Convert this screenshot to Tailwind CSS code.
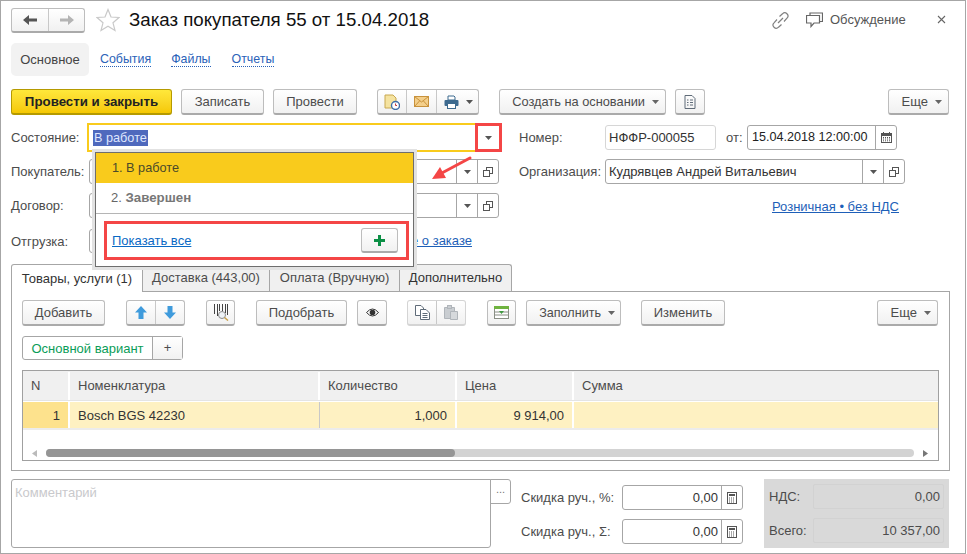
<!DOCTYPE html>
<html lang="ru">
<head>
<meta charset="utf-8">
<title>Заказ покупателя 55</title>
<script src="https://cdn.jsdelivr.net/npm/@tailwindcss/browser@4"></script>
</head>
<body class="bg-white">
<div class="relative w-[966px] h-[554px] border border-[#a6a6a6] overflow-hidden bg-white text-[13px] text-[#4c4c4c] [font-family:'Liberation_Sans',sans-serif]">

  <!-- header -->
  <div class="flex items-center mt-[7px] h-[24px]">
    <div class="flex ml-[10px] w-[74px] h-[25px] rounded-[3px] border border-[#bdbdbd] border-b-2 border-b-[#aaa] bg-linear-to-b from-white to-[#f1f1f1]">
      <div class="w-[37px] flex items-center justify-center border-r border-[#c8c8c8]">
        <svg width="14" height="12" viewBox="0 0 14 12"><path d="M0 6 L6 1 V4.5 H14 V7.5 H6 V11 Z" fill="#555"/></svg>
      </div>
      <div class="flex-1 flex items-center justify-center">
        <svg width="14" height="12" viewBox="0 0 14 12"><path d="M14 6 L8 1 V4.5 H0 V7.5 H8 V11 Z" fill="#b4b4b4"/></svg>
      </div>
    </div>
    <svg class="ml-[11px]" width="24" height="24" viewBox="0 0 24 24"><path d="M12 1.5 L15 9 L23 9.5 L17 14.8 L19 22.5 L12 18.2 L5 22.5 L7 14.8 L1 9.5 L9 9 Z" fill="none" stroke="#c9c9c9" stroke-width="1.2"/></svg>
    <div class="ml-[9px] w-[320px] text-[18.7px] text-[#111] whitespace-nowrap">Заказ покупателя 55 от 15.04.2018</div>
    <svg class="ml-[323px]" width="17" height="17" viewBox="0 0 17 17" fill="none" stroke="#808080" stroke-width="1.2"><path d="M7.5 4.5 L10.5 1.8 A2.8 2.8 0 0 1 15 6.2 L12 9.5"/><path d="M9.5 12.5 L6.5 15.2 A2.8 2.8 0 0 1 2 10.8 L5 7.5"/><path d="M6 11 L11 6"/></svg>
    <svg class="ml-[17px]" width="17" height="16" viewBox="0 0 17 16" fill="none" stroke="#666" stroke-width="1.2"><path d="M4 3.5 V1 H16.5 V9.5 H13.5"/><path d="M0.5 3.5 H13.5 V11 H8 L5 14.5 V11 H0.5 Z" fill="#fff"/></svg>
    <div class="ml-[7px] text-[#555] whitespace-nowrap">Обсуждение</div>
    <svg class="ml-[31px] -mt-[2px]" width="9" height="9" viewBox="0 0 9 9" stroke="#666" stroke-width="1.1"><path d="M1 1 L8 8 M8 1 L1 8"/></svg>
  </div>

  <!-- section tabs -->
  <div class="flex items-center mt-[11px] h-[33px] ml-[10px]">
    <div class="w-[78px] h-full flex items-center justify-center rounded-[5px] bg-[#f2f2f2] text-[#444]">Основное</div>
    <a class="ml-[11px] text-[12.4px] text-[#2a62b8] border-b border-dotted border-[#2a62b8] leading-[14px]">События</a>
    <a class="ml-[20px] text-[12.4px] text-[#2a62b8] border-b border-dotted border-[#2a62b8] leading-[14px]">Файлы</a>
    <a class="ml-[21px] text-[12.4px] text-[#2a62b8] border-b border-dotted border-[#2a62b8] leading-[14px]">Отчеты</a>
  </div>

  <!-- command bar -->
  <div class="flex mt-[13px] h-[26px] ml-[10px]">
    <div class="w-[161px] flex items-center justify-center rounded-[3px] border border-[#b59a00] border-b-2 bg-linear-to-b from-[#ffe83a] to-[#f5c800] font-bold text-[13.3px] text-[#222]">Провести и закрыть</div>
    <div class="ml-[9px] w-[83px] flex items-center justify-center rounded-[3px] border border-[#bdbdbd] border-b-2 border-b-[#aaa] bg-linear-to-b from-white to-[#f1f1f1]">Записать</div>
    <div class="ml-[9px] w-[84px] flex items-center justify-center rounded-[3px] border border-[#bdbdbd] border-b-2 border-b-[#aaa] bg-linear-to-b from-white to-[#f1f1f1]">Провести</div>
    <div class="ml-[20px] w-[102px] flex rounded-[3px] border border-[#bdbdbd] border-b-2 border-b-[#aaa] bg-linear-to-b from-white to-[#f1f1f1]">
      <div class="w-[29px] flex items-center justify-center border-r border-[#c8c8c8]">
        <svg width="16" height="16" viewBox="0 0 16 16"><path d="M1 1 H9 L12 4 V14 H1 Z" fill="#f5e3a0" stroke="#c8a850"/><circle cx="11.5" cy="11.5" r="4" fill="#fff" stroke="#3f6fa8" stroke-width="1.4"/><path d="M11.5 9.5 V11.5 H13" stroke="#c23b3b" fill="none"/></svg>
      </div>
      <div class="w-[30px] flex items-center justify-center border-r border-[#c8c8c8]">
        <svg width="15" height="11" viewBox="0 0 15 11"><rect x="0.5" y="0.5" width="14" height="10" fill="#f4cf8a" stroke="#c8923c"/><path d="M0.5 0.5 L7.5 6 L14.5 0.5 M0.5 10.5 L5.5 5 M14.5 10.5 L9.5 5" fill="none" stroke="#c8923c"/></svg>
      </div>
      <div class="flex-1 flex items-center pl-[7px]">
        <svg width="15" height="14" viewBox="0 0 15 14"><path d="M4 1 H10 L11 2 V5 H4 Z" fill="#fff" stroke="#3d6a8f"/><rect x="0.5" y="5" width="14" height="6" rx="1" fill="#3d6a8f"/><rect x="3.5" y="8.5" width="8" height="5" fill="#fff" stroke="#3d6a8f"/></svg>
        <svg class="ml-[7px]" width="7" height="4" viewBox="0 0 7 4"><path d="M0 0 H7 L3.5 4 Z" fill="#555"/></svg>
      </div>
    </div>
    <div class="ml-[20px] w-[167px] flex items-center justify-end gap-[7px] pr-[6px] rounded-[3px] border border-[#bdbdbd] border-b-2 border-b-[#aaa] bg-linear-to-b from-white to-[#f1f1f1] text-[12.8px]">Создать на основании
      <svg width="7" height="4" viewBox="0 0 7 4"><path d="M0 0 H7 L3.5 4 Z" fill="#666"/></svg>
    </div>
    <div class="ml-[9px] w-[30px] flex items-center justify-center rounded-[3px] border border-[#bdbdbd] border-b-2 border-b-[#aaa] bg-linear-to-b from-white to-[#f1f1f1]">
      <svg width="12" height="14" viewBox="0 0 12 14" fill="none" stroke="#5f6b78"><path d="M1 .5 H8 L11 3.5 V13.5 H1 Z"/><path d="M3 5 H4.5 M6 5 H9 M3 7.5 H4.5 M6 7.5 H9 M3 10 H4.5 M6 10 H9"/></svg>
    </div>
    <div class="ml-[183px] w-[61px] flex items-center justify-end gap-[7px] pr-[6px] rounded-[3px] border border-[#bdbdbd] border-b-2 border-b-[#aaa] bg-linear-to-b from-white to-[#f1f1f1]">Еще
      <svg width="7" height="4" viewBox="0 0 7 4"><path d="M0 0 H7 L3.5 4 Z" fill="#666"/></svg>
    </div>
  </div>

  <!-- row: state, number, date -->
  <div class="flex items-center mt-[8px] h-[29px] ml-[10px]">
    <div class="w-[76px]">Состояние:</div>
    <div class="relative w-[415px] h-full flex items-center border-2 border-[#f9cb1c] pl-[4px] bg-white">
      <span class="bg-[#4f69bd] text-[#dfe6ff] text-[12.7px] px-px leading-[16px]">В работе</span>
      <div class="absolute -right-[2px] -top-[2px] w-[27px] h-[29px] border-[3px] border-[#f44646] flex items-center justify-center">
        <svg width="7" height="4" viewBox="0 0 7 4"><path d="M0 0 H7 L3.5 4 Z" fill="#555"/></svg>
      </div>
    </div>
    <div class="ml-[17px] w-[86px]">Номер:</div>
    <div class="w-[111px] h-[25px] flex items-center pl-[3px] rounded-[3px] border border-[#d6d6d6] text-[#333]">НФФР-000055</div>
    <div class="ml-[10px] w-[21px]">от:</div>
    <div class="w-[150px] h-[25px] flex rounded-[3px] border border-[#a6a6a6] text-[#222]">
      <div class="flex-1 flex items-center pl-[4px] text-[12.6px] whitespace-nowrap">15.04.2018 12:00:00</div>
      <div class="w-[21px] flex items-center justify-center border-l border-[#a6a6a6]">
        <svg width="11" height="11" viewBox="0 0 11 11"><rect x="0.5" y="1.5" width="10" height="9" fill="none" stroke="#555"/><rect x="0.5" y="1.5" width="10" height="2.5" fill="#555"/><path d="M2.5 0 V2 M8.5 0 V2" stroke="#555"/><path d="M2 5.5 H9 M2 7 H9 M2 8.8 H9" stroke="#555" stroke-dasharray="1 1"/></svg>
      </div>
    </div>
  </div>

  <!-- row: customer, organisation -->
  <div class="flex items-center mt-[7px] h-[25px] ml-[10px]">
    <div class="w-[78px] whitespace-nowrap">Покупатель:</div>
    <div class="w-[410px] h-full flex rounded-[3px] border border-[#a6a6a6]">
      <div class="flex-1"></div>
      <div class="w-[21px] flex items-center justify-center border-l border-[#a6a6a6]"><svg width="7" height="4" viewBox="0 0 7 4"><path d="M0 0 H7 L3.5 4 Z" fill="#555"/></svg></div>
      <div class="w-[21px] flex items-center justify-center border-l border-[#a6a6a6]"><svg width="10" height="10" viewBox="0 0 10 10" fill="#fff" stroke="#555"><rect x="3.5" y=".5" width="6" height="6"/><rect x=".5" y="3.5" width="6" height="6"/></svg></div>
    </div>
    <div class="ml-[20px] w-[86px] whitespace-nowrap">Организация:</div>
    <div class="w-[300px] h-full flex rounded-[3px] border border-[#a6a6a6] text-[#333]">
      <div class="flex-1 flex items-center pl-[3px] whitespace-nowrap">Кудрявцев Андрей Витальевич</div>
      <div class="w-[21px] flex items-center justify-center border-l border-[#a6a6a6]"><svg width="7" height="4" viewBox="0 0 7 4"><path d="M0 0 H7 L3.5 4 Z" fill="#555"/></svg></div>
      <div class="w-[21px] flex items-center justify-center border-l border-[#a6a6a6]"><svg width="10" height="10" viewBox="0 0 10 10" fill="#fff" stroke="#555"><rect x="3.5" y=".5" width="6" height="6"/><rect x=".5" y="3.5" width="6" height="6"/></svg></div>
    </div>
  </div>

  <!-- row: contract, price type -->
  <div class="flex items-center mt-[9px] h-[25px] ml-[10px]">
    <div class="w-[78px]">Договор:</div>
    <div class="w-[410px] h-full flex rounded-[3px] border border-[#a6a6a6]">
      <div class="flex-1"></div>
      <div class="w-[21px] flex items-center justify-center border-l border-[#a6a6a6]"><svg width="7" height="4" viewBox="0 0 7 4"><path d="M0 0 H7 L3.5 4 Z" fill="#555"/></svg></div>
      <div class="w-[21px] flex items-center justify-center border-l border-[#a6a6a6]"><svg width="10" height="10" viewBox="0 0 10 10" fill="#fff" stroke="#555"><rect x="3.5" y=".5" width="6" height="6"/><rect x=".5" y="3.5" width="6" height="6"/></svg></div>
    </div>
    <a class="ml-[273px] mt-[3px] text-[#1e5fb8] underline whitespace-nowrap">Розничная • без НДС</a>
  </div>

  <!-- row: shipment -->
  <div class="flex items-center mt-[11px] h-[24px] ml-[10px]">
    <div class="w-[78px] pt-px">Отгрузка:</div>
    <div class="w-[100px] h-full rounded-l-[3px] border border-[#a6a6a6]"></div>
    <a class="ml-[222px] text-[#1e5fb8] underline whitespace-nowrap">е о заказе</a>
  </div>

  <!-- document tabs -->
  <div class="relative flex mt-[11px] h-[28px] ml-[10px]">
    <div class="w-[132px] flex items-center justify-center rounded-t-[3px] border border-[#a6a6a6] border-b-0 bg-white text-[#333] h-[28px]">Товары, услуги (1)</div>
    <div class="w-[127px] flex items-center justify-center border-t border-r border-[#a6a6a6] bg-[#f0f0f0] h-[27px]">Доставка (443,00)</div>
    <div class="w-[130px] flex items-center justify-center border-t border-r border-[#a6a6a6] bg-[#f0f0f0] h-[27px]">Оплата (Вручную)</div>
    <div class="w-[112px] flex items-center justify-center rounded-tr-[3px] border-t border-r border-[#a6a6a6] bg-[#f0f0f0] h-[27px] text-[#333]">Дополнительно</div>
  </div>

  <!-- tab panel -->
  <div class="-mt-px ml-[10px] w-[939px] h-[180px] border border-[#a6a6a6]">
    <div class="flex mt-[8px] h-[26px] ml-[10px]">
      <div class="w-[83px] flex items-center justify-center pt-px rounded-[3px] border border-[#bdbdbd] border-b-2 border-b-[#aaa] bg-linear-to-b from-white to-[#f1f1f1]">Добавить</div>
      <div class="ml-[21px] w-[59px] flex rounded-[3px] border border-[#bdbdbd] border-b-2 border-b-[#aaa] bg-linear-to-b from-white to-[#f1f1f1]">
        <div class="w-[29px] flex items-center justify-center border-r border-[#c8c8c8]"><svg width="12" height="13" viewBox="0 0 12 13"><path d="M6 0 L12 6.5 H8.5 V13 H3.5 V6.5 H0 Z" fill="#3f9bdc"/></svg></div>
        <div class="flex-1 flex items-center justify-center"><svg width="12" height="13" viewBox="0 0 12 13"><path d="M6 13 L12 6.5 H8.5 V0 H3.5 V6.5 H0 Z" fill="#3f9bdc"/></svg></div>
      </div>
      <div class="ml-[21px] w-[29px] flex items-center justify-center rounded-[3px] border border-[#bdbdbd] border-b-2 border-b-[#aaa] bg-linear-to-b from-white to-[#f1f1f1]">
        <svg width="16" height="17" viewBox="0 0 16 17"><path d="M1.5 0 V10 M4.5 0 V12 M6.5 0 V7 M9.5 0 V7 M12.5 0 V9 M14.5 0 V11" stroke="#444" fill="none"/><circle cx="9" cy="11" r="3.5" fill="#eef2f6" stroke="#8a8a8a"/><path d="M11.5 13.5 L15 16.5" stroke="#c9a14a" stroke-width="1.5"/></svg>
      </div>
      <div class="ml-[21px] w-[91px] flex items-center justify-center pt-px rounded-[3px] border border-[#bdbdbd] border-b-2 border-b-[#aaa] bg-linear-to-b from-white to-[#f1f1f1]">Подобрать</div>
      <div class="ml-[10px] w-[30px] flex items-center justify-center rounded-[3px] border border-[#bdbdbd] border-b-2 border-b-[#aaa] bg-linear-to-b from-white to-[#f1f1f1]">
        <svg width="13" height="9" viewBox="0 0 13 9"><path d="M0.5 4.5 Q6.5 -2.5 12.5 4.5 Q6.5 11.5 0.5 4.5 Z" fill="#fff" stroke="#333"/><circle cx="6.5" cy="4.5" r="2.8" fill="#333"/></svg>
      </div>
      <div class="ml-[20px] w-[59px] flex rounded-[3px] border border-[#d4d4d4] border-b-2 bg-linear-to-b from-white to-[#f1f1f1]">
        <div class="w-[29px] flex items-center justify-center border-r border-[#c8c8c8]"><svg width="15" height="15" viewBox="0 0 15 15" fill="#fff" stroke="#5f6b78"><path d="M.5 .5 H6 L8.5 3 V10.5 H.5 Z"/><path d="M5.5 4.5 H11 L14.5 8 V14.5 H5.5 Z"/><path d="M7.5 8.5 H12.5 M7.5 10.5 H12.5 M7.5 12.5 H12.5"/></svg></div>
        <div class="flex-1 flex items-center justify-center"><svg width="14" height="15" viewBox="0 0 14 15" fill="#c9cdd1" stroke="#b0b5ba"><path d="M.5 2.5 H10.5 V13.5 H.5 Z"/><rect x="3.5" y=".5" width="4" height="3"/><path d="M6.5 6.5 H13.5 V14.5 H6.5 Z" fill="#d6d9dc"/></svg></div>
      </div>
      <div class="ml-[21px] w-[29px] flex items-center justify-center rounded-[3px] border border-[#bdbdbd] border-b-2 border-b-[#aaa] bg-linear-to-b from-white to-[#f1f1f1]">
        <svg width="15" height="13" viewBox="0 0 15 13"><rect x=".5" y=".5" width="14" height="12" fill="#fff" stroke="#8a8f85"/><rect x="0" y="0" width="15" height="3" fill="#6fb33f"/><path d="M1 6 H14 M1 9 H14" stroke="#8a8f85"/><path d="M5 5 H10 L7.5 8 Z" fill="#3f9a3f"/></svg>
      </div>
      <div class="ml-[10px] w-[95px] flex items-center justify-end gap-[7px] pr-[5px] pt-px rounded-[3px] border border-[#bdbdbd] border-b-2 border-b-[#aaa] bg-linear-to-b from-white to-[#f1f1f1] text-[12.6px]">Заполнить
        <svg width="7" height="4" viewBox="0 0 7 4"><path d="M0 0 H7 L3.5 4 Z" fill="#666"/></svg>
      </div>
      <div class="ml-[20px] w-[84px] flex items-center justify-center pt-px rounded-[3px] border border-[#bdbdbd] border-b-2 border-b-[#aaa] bg-linear-to-b from-white to-[#f1f1f1]">Изменить</div>
      <div class="ml-[152px] w-[61px] flex items-center justify-end gap-[7px] pr-[6px] pt-px rounded-[3px] border border-[#bdbdbd] border-b-2 border-b-[#aaa] bg-linear-to-b from-white to-[#f1f1f1]">Еще
        <svg width="7" height="4" viewBox="0 0 7 4"><path d="M0 0 H7 L3.5 4 Z" fill="#666"/></svg>
      </div>
    </div>

    <div class="flex mt-[10px] ml-[10px] w-[161px] h-[24px] rounded-[3px] border border-[#a6a6a6]">
      <div class="w-[129px] flex items-center justify-center pt-px text-[#0a9d58] whitespace-nowrap">Основной вариант</div>
      <div class="flex-1 flex items-center justify-center border-l border-[#a6a6a6] bg-linear-to-b from-white to-[#f1f1f1]">+</div>
    </div>

    <!-- table -->
    <div class="mt-[10px] ml-[10px] w-[917px] h-[91px] border border-[#a0a0a0]">
      <div class="grid grid-cols-[47px_250px_137px_117px_1fr] h-[30px] pt-px bg-[#f0f0f0] border-b border-[#e4e4e4]">
        <div class="flex items-center pl-[8px] border-r-2 border-white">N</div>
        <div class="flex items-center pl-[8px] border-r-2 border-white">Номенклатура</div>
        <div class="flex items-center pl-[8px] border-r-2 border-white">Количество</div>
        <div class="flex items-center pl-[8px] border-r-2 border-white">Цена</div>
        <div class="flex items-center pl-[8px]">Сумма</div>
      </div>
      <div class="grid grid-cols-[47px_250px_137px_117px_1fr] h-[28px] mt-px bg-[#fef1c2] border-b-2 border-[#ececec] text-[#333]">
        <div class="flex items-center justify-end pt-[2px] pr-[8px] bg-[#fde28d] border-r-2 border-white">1</div>
        <div class="flex items-center pt-[2px] pl-[8px] border-r border-[#c8c8c8]">Bosch BGS 42230</div>
        <div class="flex items-center justify-end pt-[2px] pr-[8px] border-r-2 border-white">1,000</div>
        <div class="flex items-center justify-end pt-[2px] pr-[8px] border-r-2 border-white">9 914,00</div>
        <div></div>
      </div>
      <div class="flex items-center mt-[19px] h-[8px]">
        <svg class="ml-[9px]" width="5" height="7" viewBox="0 0 5 7"><path d="M5 0 V7 L0 3.5 Z" fill="#bbb"/></svg>
        <div class="ml-[9px] w-[868px] h-[8px] rounded-full bg-[#d3d3d3]">
          <div class="w-[409px] h-full rounded-full bg-[#959595]"></div>
        </div>
        <svg class="ml-[9px]" width="5" height="7" viewBox="0 0 5 7"><path d="M0 0 V7 L5 3.5 Z" fill="#777"/></svg>
      </div>
    </div>
  </div>

  <!-- footer -->
  <div class="flex mt-[8px] ml-[10px] h-[69px]">
    <div class="w-[480px] h-full rounded-l-[3px] rounded-br-[3px] border border-[#a6a6a6] pl-[3px] pt-[3px] text-[#c9c9cc]">Комментарий</div>
    <div class="w-[21px] h-[25px] -ml-px flex items-center justify-center rounded-r-[3px] border border-[#a6a6a6] text-[#777] text-[11px] pb-[4px]">...</div>
    <div class="ml-[10px] w-[223px] pt-[6px]">
      <div class="flex items-center h-[25px]">
        <div class="w-[101px] whitespace-nowrap">Скидка руч., %:</div>
        <div class="w-[121px] h-full flex rounded-[3px] border border-[#a6a6a6] text-[#333]">
          <div class="flex-1 flex items-center justify-end pr-[3px]">0,00</div>
          <div class="w-[21px] flex items-center justify-center border-l border-[#a6a6a6]">
            <svg width="10" height="12" viewBox="0 0 10 12"><rect x=".5" y=".5" width="9" height="11" fill="none" stroke="#555"/><rect x="2" y="2" width="6" height="2" fill="#555"/><path d="M2 6 H8 M2 8 H8 M2 10 H8" stroke="#555" stroke-dasharray="1 1"/></svg>
          </div>
        </div>
      </div>
      <div class="flex items-center h-[25px] mt-[9px]">
        <div class="w-[101px] whitespace-nowrap">Скидка руч., Σ:</div>
        <div class="w-[121px] h-full flex rounded-[3px] border border-[#a6a6a6] text-[#333]">
          <div class="flex-1 flex items-center justify-end pr-[3px]">0,00</div>
          <div class="w-[21px] flex items-center justify-center border-l border-[#a6a6a6]">
            <svg width="10" height="12" viewBox="0 0 10 12"><rect x=".5" y=".5" width="9" height="11" fill="none" stroke="#555"/><rect x="2" y="2" width="6" height="2" fill="#555"/><path d="M2 6 H8 M2 8 H8 M2 10 H8" stroke="#555" stroke-dasharray="1 1"/></svg>
          </div>
        </div>
      </div>
    </div>
    <div class="ml-[20px] w-[185px] h-full bg-[#d9d9d9] pl-[5px] pr-[5px] pt-[5px]">
      <div class="flex items-center h-[25px]">
        <div class="w-[44px]">НДС:</div>
        <div class="flex-1 h-full flex items-center justify-end pr-[3px] border border-[#d2d2d2] rounded-[2px]">0,00</div>
      </div>
      <div class="flex items-center h-[25px] mt-[9px]">
        <div class="w-[44px]">Всего:</div>
        <div class="flex-1 h-full flex items-center justify-end pr-[3px] border border-[#d2d2d2] rounded-[2px]">10 357,00</div>
      </div>
    </div>
  </div>

  <!-- dropdown list over the form -->
  <div class="absolute left-[94px] top-[151px] w-[319px] h-[115px] border border-[#6e6e6e] bg-white shadow-[0_0_0_3px_#e2e2e2]">
    <div class="h-[30px] flex items-center pl-[16px] pt-px bg-[#f9cb1c] text-[12.7px] text-[#4a4a2a]">1. В работе</div>
    <div class="h-[31px] flex items-center pl-[15px] border-b border-[#b5b5b5] text-[#666]"><span>2.&nbsp;<b class="text-[#777] text-[13.3px]">Завершен</b></span></div>
    <div class="mt-[7px] ml-[8px] w-[305px] h-[39px] border-[3px] border-[#f44646] flex items-center pl-[5px] pr-[8px] justify-between">
      <a class="text-[#0a69c4] underline">Показать все</a>
      <div class="w-[37px] h-[25px] flex items-center justify-center rounded-[3px] border border-[#bdbdbd] border-b-2 border-b-[#aaa] bg-linear-to-b from-white to-[#f1f1f1]">
        <svg width="11" height="11" viewBox="0 0 11 11"><path d="M4 0 H7 V4 H11 V7 H7 V11 H4 V7 H0 V4 H4 Z" fill="#0b8f45"/></svg>
      </div>
    </div>
  </div>

  <!-- red annotation arrow -->
  <svg class="absolute left-[425px] top-[152px]" width="50" height="32" viewBox="0 0 50 32"><path d="M44 5 L14 21" stroke="#f44646" stroke-width="3" stroke-linecap="round"/><path d="M6 26 L14 14 L20 25 Z" fill="#f44646"/></svg>
</div>
</body>
</html>
